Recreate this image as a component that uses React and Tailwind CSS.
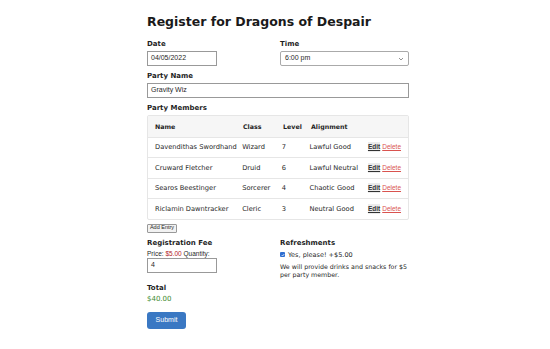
export default function App() {
  const rows = [
    ["Davendithas Swordhand", "Wizard", "7", "Lawful Good"],
    ["Cruward Fletcher", "Druid", "6", "Lawful Neutral"],
    ["Searos Beestinger", "Sorcerer", "4", "Chaotic Good"],
    ["Riclamin Dawntracker", "Cleric", "3", "Neutral Good"],
  ];
  const f = { fontFamily: '"DejaVu Sans", Verdana, sans-serif' };
  const a = { fontFamily: '"Liberation Sans", Arial, sans-serif' };
  return (
    <div className="w-[550px] h-[349px] bg-white text-[#1f1f1f]" style={f}>
      <div className="ml-[147px] w-[262px] pt-[14px]">
        <h1 className="text-[12.5px] font-bold leading-[16px] text-[#1a1a1a]">Register for Dragons of Despair</h1>
        <div className="mt-[10px] flex">
          <div className="w-[133px]">
            <div className="text-[7px] font-bold leading-[8px]">Date</div>
            <div className="mt-[3px] w-[70px] h-[15px] border border-[#999] flex items-center px-[3px] text-[7px]" style={a}>04/05/2022</div>
          </div>
          <div className="flex-1">
            <div className="text-[7px] font-bold leading-[8px]">Time</div>
            <div className="mt-[3px] h-[15px] border border-[#aaa] rounded-[2px] flex items-center justify-between px-[4px] text-[7px]" style={a}>
              <span>6:00 pm</span>
              <svg width="6" height="4" viewBox="0 0 6 4"><path d="M1 1l2 2 2-2" stroke="#777" fill="none" strokeWidth="0.8" /></svg>
            </div>
          </div>
        </div>
        <div className="mt-[6px] text-[7px] font-bold leading-[8px]">Party Name</div>
        <div className="mt-[3px] h-[15px] border border-[#999] flex items-center px-[3px] text-[7px]" style={a}>Gravity Wiz</div>
        <div className="mt-[6px] text-[7px] font-bold leading-[8px]">Party Members</div>
        <div className="mt-[3px] border border-[#e6e6e6] rounded-[2px] overflow-hidden">
          <div className="flex items-center h-[20.5px] bg-[#f6f6f6] text-[6.3px] font-bold px-[7px]">
            <div className="w-[88px]">Name</div>
            <div className="w-[40px]">Class</div>
            <div className="w-[28px]">Level</div>
            <div>Alignment</div>
          </div>
          {rows.map((r, i) => (
            <div key={i} className="flex items-center h-[20.5px] border-t border-[#e6e6e6] text-[6.7px] px-[7px]">
              <div className="w-[88px]">{r[0]}</div>
              <div className="w-[40px]">{r[1]}</div>
              <div className="w-[28px]">{r[2]}</div>
              <div className="w-[59px]">{r[3]}</div>
              <div className="flex gap-[2px] text-[6.5px]" style={a}>
                <span className="underline text-[#333] font-bold bg-[#ececec]">Edit</span>
                <span className="underline text-[#d9534f]">Delete</span>
              </div>
            </div>
          ))}
        </div>
        <div className="mt-[4px] flex w-[30px] justify-center items-center h-[9px] border border-[#999] rounded-[1px] bg-[#f2f2f2] text-[5.5px] leading-none" style={a}>Add Entry</div>
        <div className="mt-[6px] flex">
          <div className="w-[133px]">
            <div className="text-[7px] font-bold leading-[8px]">Registration Fee</div>
            <div className="mt-[3px] text-[6.5px] leading-[8px]" style={a}>
              Price: <span className="text-[#b22222]">$5.00</span> Quantity:
            </div>
            <div className="mt-[0px] w-[70px] h-[15px] border border-[#999] flex items-center px-[3px] text-[7px]" style={a}>4</div>
            <div className="mt-[11px] text-[7px] font-bold leading-[8px]">Total</div>
            <div className="mt-[3px] text-[7px] leading-[8px] text-[#3c8a2e]">$40.00</div>
            <div className="mt-[9px] w-[39px] h-[17px] rounded-[3px] bg-[#3a78c3] text-white text-[7px] flex items-center justify-center" style={a}>Submit</div>
          </div>
          <div className="flex-1">
            <div className="text-[7px] font-bold leading-[8px]">Refreshments</div>
            <div className="mt-[4px] flex items-center gap-[3px] text-[6.5px] leading-[8px]">
              <span className="w-[5px] h-[5px] bg-[#2f6fd1] rounded-[1px] flex items-center justify-center">
                <svg width="4" height="4" viewBox="0 0 4 4"><path d="M0.7 2l0.9 1 1.7-2" stroke="white" fill="none" strokeWidth="0.7" /></svg>
              </span>
              <span>Yes, please! +$5.00</span>
            </div>
            <div className="mt-[4px] text-[6.3px] leading-[8px] w-[128px]">We will provide drinks and snacks for $5 per party member.</div>
          </div>
        </div>
      </div>
    </div>
  );
}
